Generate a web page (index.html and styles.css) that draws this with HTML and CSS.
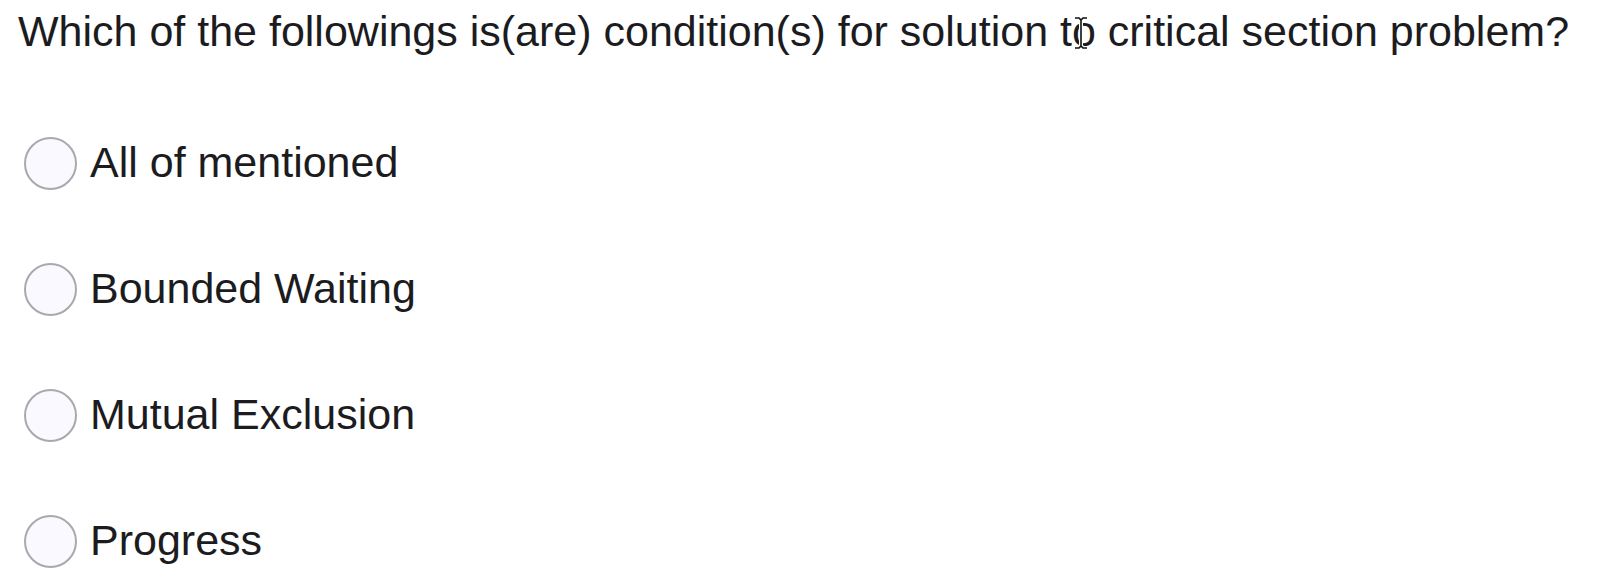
FILE: index.html
```html
<!DOCTYPE html>
<html>
<head>
<meta charset="utf-8">
<link rel="stylesheet" href="styles.css">
</head>
<body>
<div class="page">
  <div class="question">Which of the followings is(are) condition(s) for solution to critical section problem?</div>
  <div class="options">
    <label class="option"><span class="radio"></span><span class="label">All of mentioned</span></label>
    <label class="option"><span class="radio"></span><span class="label">Bounded Waiting</span></label>
    <label class="option"><span class="radio"></span><span class="label">Mutual Exclusion</span></label>
    <label class="option"><span class="radio"></span><span class="label">Progress</span></label>
  </div>
  <svg class="cursor" width="16" height="34" viewBox="0 0 16 34">
    <path d="M2 2 H6 L8 4 L10 2 H14 M8 4 V30 M2 32 H6 L8 30 L10 32 H14" fill="none" stroke="#fff" stroke-width="4"/>
    <path d="M2 2 H6 L8 4 L10 2 H14 M8 4 V30 M2 32 H6 L8 30 L10 32 H14" fill="none" stroke="#111" stroke-width="1.6"/>
  </svg>
</div>
</body>
</html>
```
FILE: styles.css
```css
html, body {
  margin: 0;
  padding: 0;
  background: #ffffff;
}
.page {
  position: relative;
  width: 1604px;
  height: 578px;
  overflow: hidden;
  font-family: "Liberation Sans", Arial, sans-serif;
  color: #1c1c1f;
}
.question {
  font-size: 43px;
  line-height: 48px;
  padding: 7px 0 0 18px;
  white-space: nowrap;
}
.options {
  display: flex;
  flex-direction: column;
  gap: 73px;
  margin-top: 82px;
  padding-left: 24px;
}
.option {
  display: flex;
  align-items: center;
  height: 53px;
}
.radio {
  width: 49px;
  height: 49px;
  border: 2px solid #a9a9ad;
  border-radius: 50%;
  background: #f9f9ff;
  flex: none;
}
.label {
  font-size: 43px;
  line-height: 48px;
  margin-left: 13px;
  margin-top: -4px;
}
.cursor {
  position: absolute;
  left: 1073px;
  top: 16px;
}
```
